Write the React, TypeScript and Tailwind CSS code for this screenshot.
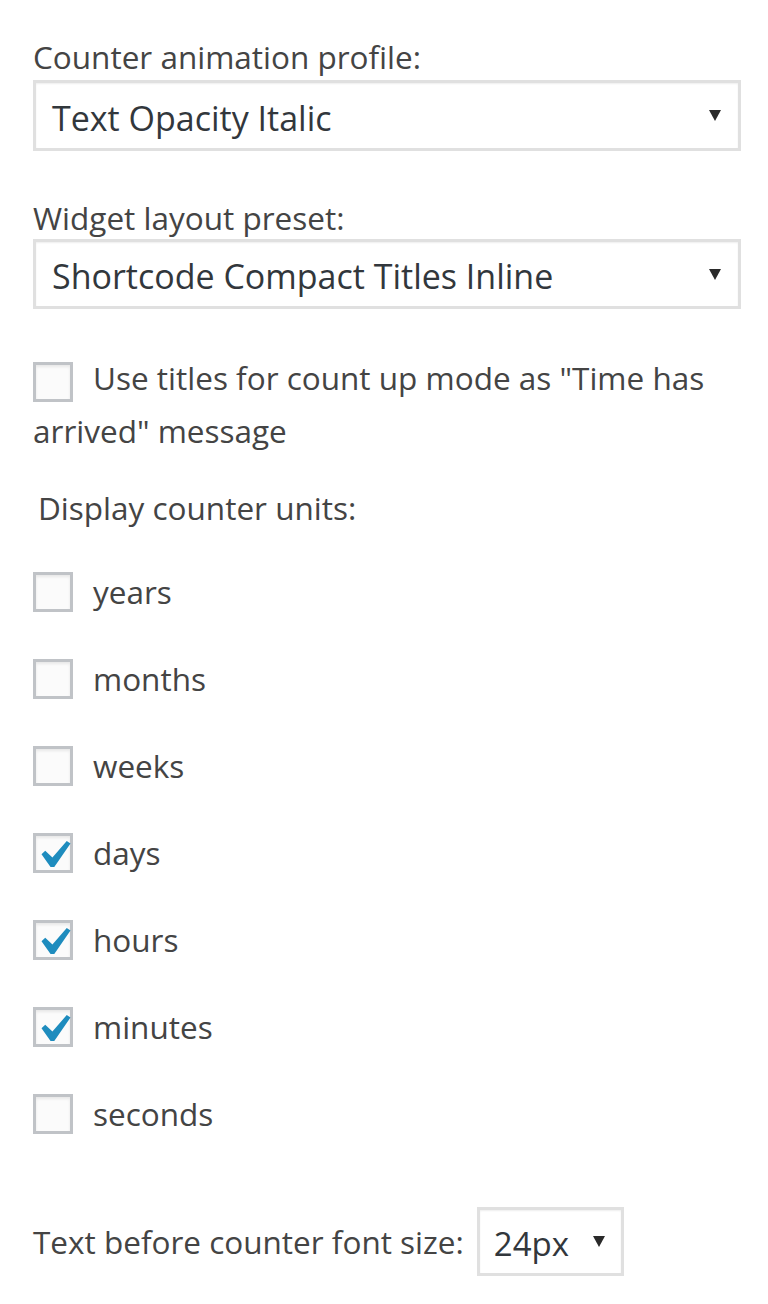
import { useState } from "react";

const units = [
  { id: "years", checked: false },
  { id: "months", checked: false },
  { id: "weeks", checked: false },
  { id: "days", checked: true },
  { id: "hours", checked: true },
  { id: "minutes", checked: true },
  { id: "seconds", checked: false },
];

function Arrow() {
  return (
    <svg width="12" height="11" viewBox="0 0 12 11" className="shrink-0">
      <polygon points="0,0 12,0 6,11" fill="#2a2a2a" />
    </svg>
  );
}

function Checkbox({ checked, onClick }: { checked: boolean; onClick?: () => void }) {
  return (
    <span
      onClick={onClick}
      className="relative inline-block w-[40px] h-[40px] shrink-0 border-[3px] border-[#c0c3c7] bg-[#fbfbfb] shadow-[inset_0_2px_3px_rgba(0,0,0,0.08)] align-middle cursor-pointer"
    >
      {checked && (
        <svg
          width="30"
          height="26"
          viewBox="5.78 4.89 10.39 9.32"
          className="absolute left-[5px] top-[5px]"
        >
          <path d="M14.83 4.89l1.34.94-5.81 8.38H9.02L5.78 9.67l1.34-1.25 2.57 2.4z" fill="#1e8cbe" />
        </svg>
      )}
    </span>
  );
}

export default function App() {
  const [checks, setChecks] = useState(units.map((u) => u.checked));
  const [useTitles, setUseTitles] = useState(false);

  return (
    <div className="min-h-[1304px] w-[768px] bg-white pl-[33px] pr-[27px] pt-[37px] font-['Open_Sans',sans-serif] text-[31.5px] text-[#444]">
      <div className="h-[40px] leading-[40px]">Counter animation profile:</div>
      <div className="mt-[3px] h-[71px] flex items-center justify-between border-[3px] border-[#e0e0e0] shadow-[inset_0_1px_2px_rgba(0,0,0,0.07)] pl-[16px] pr-[17px] text-[34px] text-[#32373c]">
        <span className="pt-[5px]">Text Opacity Italic</span>
        <Arrow />
      </div>

      <div className="mt-[47px] h-[40px] leading-[40px]">Widget layout preset:</div>
      <div className="mt-[1px] h-[70px] flex items-center justify-between border-[3px] border-[#e0e0e0] shadow-[inset_0_1px_2px_rgba(0,0,0,0.07)] pl-[16px] pr-[17px] text-[34px] text-[#32373c]">
        <span className="pt-[5px]">Shortcode Compact Titles Inline</span>
        <Arrow />
      </div>

      <p className="mt-[42px] leading-[53px]">
        <Checkbox checked={useTitles} onClick={() => setUseTitles(!useTitles)} />
        <span className="ml-[20px]">Use titles for count up mode as "Time has arrived" message</span>
      </p>

      <div className="mt-[24px] pl-[5px] h-[53px] leading-[53px]">Display counter units:</div>

      <div className="mt-[14px] flex flex-col">
        {units.map((u, i) => (
          <label key={u.id} className="h-[87px] flex items-center gap-[20px]">
            <Checkbox
              checked={checks[i]}
              onClick={() => setChecks(checks.map((c, j) => (j === i ? !c : c)))}
            />
            <span>{u.id}</span>
          </label>
        ))}
      </div>

      <div className="mt-[50px] flex items-center gap-[13px]">
        <span>Text before counter font size:</span>
        <div className="h-[69px] w-[147px] flex items-center justify-between border-[3px] border-[#e0e0e0] shadow-[inset_0_1px_2px_rgba(0,0,0,0.07)] pl-[14px] pr-[16px] text-[33px] text-[#32373c]">
          <span className="pt-[4px]">24px</span>
          <Arrow />
        </div>
      </div>
    </div>
  );
}
